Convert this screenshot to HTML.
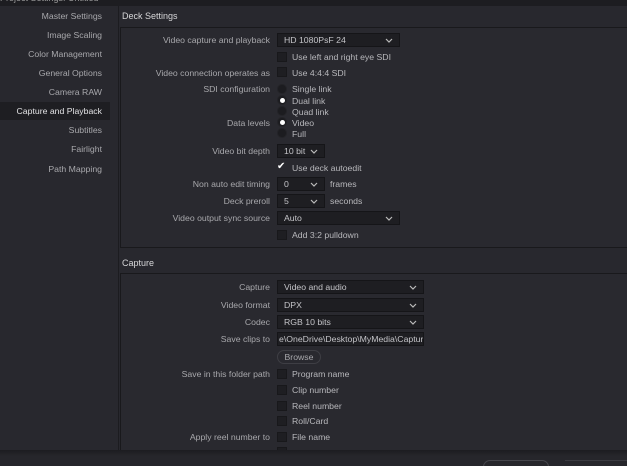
<!DOCTYPE html>
<html><head><meta charset="utf-8"><style>
*{margin:0;padding:0;box-sizing:border-box}
html,body{width:627px;height:466px;overflow:hidden}
body{background:#28282e;font-family:"Liberation Sans",sans-serif;font-size:8.7px;color:#b4b4b8;position:relative}
.a{position:absolute;white-space:nowrap}
.side{right:525px;text-align:right;color:#a8a8ac}
.lbl{right:357px;text-align:right;color:#a8a8ac}
.box{position:absolute;left:120px;width:510px;border:1px solid #19191c;background:#29292f}
.dd{position:absolute;height:14px;background:#1e1e22;border:1px solid #151518;color:#c4c4c8;padding-left:6px;line-height:12px}
.dd svg{position:absolute;right:6px;top:4px}
.cb{position:absolute;left:277px;width:10px;height:10px;background:#1e1e22;border:1px solid #18181b}
.rd{position:absolute;left:277px;width:10px;height:10px;border-radius:50%;background:#1c1c20;border:1px solid #232327}
.rd.on::after{content:"";position:absolute;left:2px;top:2px;width:5px;height:5px;border-radius:50%;background:#fff}
.t{position:absolute;left:292px;color:#b8b8bc;white-space:nowrap}
</style></head><body>
<div class="a" style="left:0;top:0;width:627px;height:6px;background:#1d1d21;overflow:hidden"><div class="a" style="left:0;top:-7px;color:#999;font-size:9px">Project Settings:  Untitled</div></div>
<div class="a" style="left:118px;top:6px;width:1px;height:444px;background:#1c1c20"></div>
<div class="a" style="left:0;top:102px;width:110px;height:18px;background:#1e1e22"></div>
<div class="a side" style="top:11px">Master Settings</div>
<div class="a side" style="top:30px">Image Scaling</div>
<div class="a side" style="top:49px">Color Management</div>
<div class="a side" style="top:68px">General Options</div>
<div class="a side" style="top:87px">Camera RAW</div>
<div class="a side" style="top:106px;color:#e2e2e4">Capture and Playback</div>
<div class="a side" style="top:125px">Subtitles</div>
<div class="a side" style="top:144px">Fairlight</div>
<div class="a side" style="top:164px">Path Mapping</div>

<div class="a" style="left:122px;top:11px;color:#d6d6d8;font-size:9px">Deck Settings</div>
<div class="box" style="top:27px;height:221px"></div>
<div class="a lbl" style="top:35px">Video capture and playback</div>
<div class="dd" style="left:277px;top:33px;width:123px">HD 1080PsF 24<svg width="8" height="5"><path d="M1 1L4 4L7 1" stroke="#bbb" fill="none" stroke-width="1.2"/></svg></div>
<div class="cb" style="top:52px"></div><div class="t" style="top:52px">Use left and right eye SDI</div>
<div class="a lbl" style="top:68px">Video connection operates as</div>
<div class="cb" style="top:67px"></div><div class="t" style="top:68px">Use 4:4:4 SDI</div>
<div class="a lbl" style="top:84px">SDI configuration</div>
<div class="rd" style="top:84px"></div><div class="t" style="top:84px">Single link</div>
<div class="rd on" style="top:95px"></div><div class="t" style="top:96px">Dual link</div>
<div class="rd" style="top:106px"></div><div class="t" style="top:107px">Quad link</div>
<div class="a lbl" style="top:118px">Data levels</div>
<div class="rd on" style="top:117px"></div><div class="t" style="top:118px">Video</div>
<div class="rd" style="top:128px"></div><div class="t" style="top:129px">Full</div>
<div class="a lbl" style="top:146px">Video bit depth</div>
<div class="dd" style="left:277px;top:144px;width:48px">10 bit<svg width="8" height="5"><path d="M1 1L4 4L7 1" stroke="#bbb" fill="none" stroke-width="1.2"/></svg></div>
<div class="cb" style="top:162px;border:none;background:none;color:#fff;font-size:10px;line-height:10px">✔</div><div class="t" style="top:163px">Use deck autoedit</div>
<div class="a lbl" style="top:179px">Non auto edit timing</div>
<div class="dd" style="left:277px;top:177px;width:48px">0<svg width="8" height="5"><path d="M1 1L4 4L7 1" stroke="#bbb" fill="none" stroke-width="1.2"/></svg></div><div class="t" style="left:330px;top:179px">frames</div>
<div class="a lbl" style="top:196px">Deck preroll</div>
<div class="dd" style="left:277px;top:194px;width:48px">5<svg width="8" height="5"><path d="M1 1L4 4L7 1" stroke="#bbb" fill="none" stroke-width="1.2"/></svg></div><div class="t" style="left:330px;top:196px">seconds</div>
<div class="a lbl" style="top:213px">Video output sync source</div>
<div class="dd" style="left:277px;top:211px;width:123px">Auto<svg width="8" height="5"><path d="M1 1L4 4L7 1" stroke="#bbb" fill="none" stroke-width="1.2"/></svg></div>
<div class="cb" style="top:230px"></div><div class="t" style="top:230px">Add 3:2 pulldown</div>

<div class="a" style="left:122px;top:258px;color:#d6d6d8;font-size:9px">Capture</div>
<div class="box" style="top:273px;height:180px"></div>
<div class="a lbl" style="top:282px">Capture</div>
<div class="dd" style="left:277px;top:280px;width:147px">Video and audio<svg width="8" height="5"><path d="M1 1L4 4L7 1" stroke="#bbb" fill="none" stroke-width="1.2"/></svg></div>
<div class="a lbl" style="top:300px">Video format</div>
<div class="dd" style="left:277px;top:298px;width:147px">DPX<svg width="8" height="5"><path d="M1 1L4 4L7 1" stroke="#bbb" fill="none" stroke-width="1.2"/></svg></div>
<div class="a lbl" style="top:317px">Codec</div>
<div class="dd" style="left:277px;top:315px;width:147px">RGB 10 bits<svg width="8" height="5"><path d="M1 1L4 4L7 1" stroke="#bbb" fill="none" stroke-width="1.2"/></svg></div>
<div class="a lbl" style="top:334px">Save clips to</div>
<div class="dd" style="left:277px;top:332px;width:147px;padding-left:1px;overflow:hidden">e\OneDrive\Desktop\MyMedia\Capture</div>
<div class="a" style="left:277px;top:350px;width:44px;height:14px;border:1px solid #3e3e44;border-radius:7px;text-align:center;line-height:12px;color:#a8a8ac">Browse</div>
<div class="a lbl" style="top:369px">Save in this folder path</div>
<div class="cb" style="top:369px"></div><div class="t" style="top:369px">Program name</div>
<div class="cb" style="top:385px"></div><div class="t" style="top:385px">Clip number</div>
<div class="cb" style="top:401px"></div><div class="t" style="top:401px">Reel number</div>
<div class="cb" style="top:416px"></div><div class="t" style="top:416px">Roll/Card</div>
<div class="a lbl" style="top:432px">Apply reel number to</div>
<div class="cb" style="top:432px"></div><div class="t" style="top:432px">File name</div>
<div class="cb" style="top:447px"></div>

<div class="a" style="left:0;top:450px;width:627px;height:16px;background:linear-gradient(#1c1c20,#26262b 6px)"></div>
<div class="a" style="left:483px;top:460px;width:66px;height:14px;border:1px solid #45454b;border-radius:7px"></div>
<div class="a" style="left:565px;top:460px;width:62px;height:14px;border-top:1px solid #3a3a40"></div>
</body></html>
